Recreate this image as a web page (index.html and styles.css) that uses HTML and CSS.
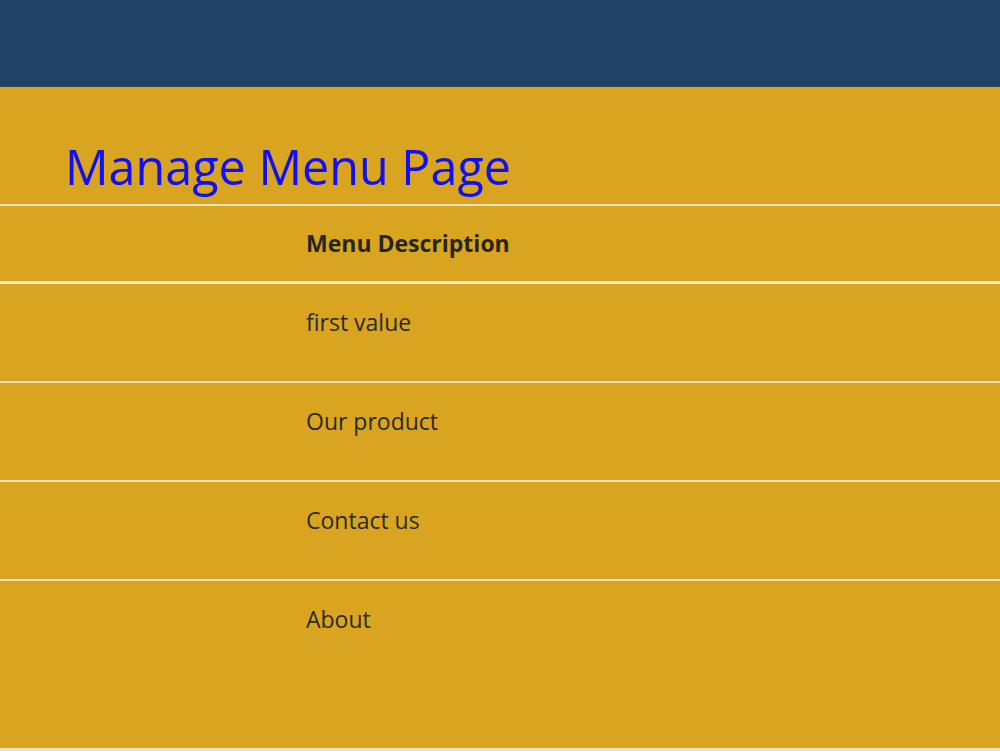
FILE: index.html
```html
<!DOCTYPE html>
<html lang="en">
<head>
<meta charset="utf-8">
<title>Manage Menu Page</title>
<link rel="stylesheet" href="styles.css">
</head>
<body>
<header class="topbar"></header>
<main class="content">
  <h1 class="page-title">Manage Menu Page</h1>
  <table class="menu-table">
    <thead>
      <tr>
        <th class="spacer"></th>
        <th class="desc">Menu Description</th>
      </tr>
    </thead>
    <tbody>
      <tr><td class="spacer"></td><td class="desc">first value</td></tr>
      <tr><td class="spacer"></td><td class="desc">Our product</td></tr>
      <tr><td class="spacer"></td><td class="desc">Contact us</td></tr>
      <tr><td class="spacer"></td><td class="desc">About</td></tr>
    </tbody>
  </table>
</main>
<footer class="page-foot"></footer>
</body>
</html>
```
FILE: styles.css
```css
html, body {
  margin: 0;
  padding: 0;
}
body {
  min-height: 751px;
  display: flex;
  flex-direction: column;
  background: #d9a520;
  font-family: "Open Sans", "Noto Sans", sans-serif;
  color: #2b2a22;
}
.topbar {
  height: 86px;
  background: #1f4266;
  border-bottom: 1px solid #3a4a4a;
  flex: none;
}
.content {
  flex: 1 0 auto;
}
.page-title {
  margin: 50px 0 9px 65px;
  font-size: 48.5px;
  font-weight: 400;
  line-height: 1.2;
  color: #1010f0;
  letter-spacing: 0;
}
.menu-table {
  width: 100%;
  border-collapse: collapse;
}
.menu-table .spacer {
  width: 306px;
  padding: 0;
}
.menu-table .desc {
  padding: 0;
  text-align: left;
}
.menu-table thead th {
  height: 75px;
  border-top: 2px solid #efe2c0;
  border-bottom: 3px solid #f4ecd6;
  vertical-align: middle;
  font-size: 23px;
  font-weight: 700;
  line-height: 1.5;
  color: #262519;
}
.menu-table tbody td {
  height: 99px;
  box-sizing: border-box;
  vertical-align: top;
  font-size: 23px;
  line-height: 1.5;
}
.menu-table tbody td.desc {
  padding-top: 21px;
}
.menu-table tbody tr + tr td {
  border-top: 2px solid #efe2c0;
}
.page-foot {
  flex: none;
  height: 3px;
  background: #f0e2b8;
}
```
